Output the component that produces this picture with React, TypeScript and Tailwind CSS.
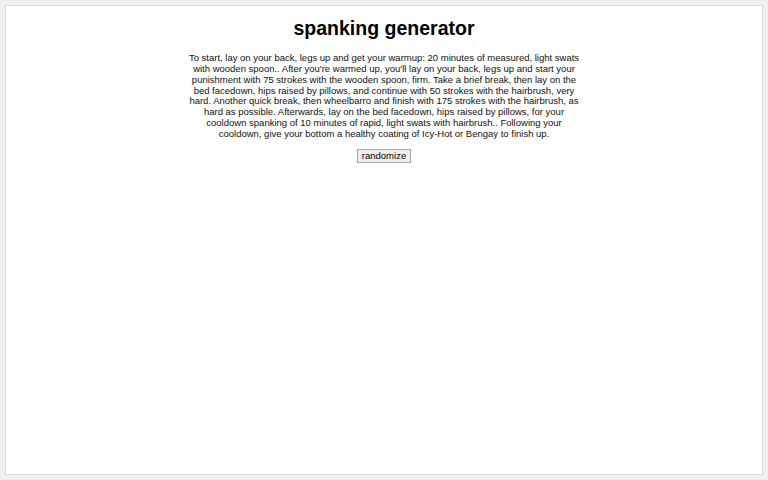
import React, { useState } from "react";

const routine =
  "To start, lay on your back, legs up and get your warmup: 20 minutes of measured, light swats with wooden spoon.. After you're warmed up, you'll lay on your back, legs up and start your punishment with 75 strokes with the wooden spoon, firm. Take a brief break, then lay on the bed facedown, hips raised by pillows, and continue with 50 strokes with the hairbrush, very hard. Another quick break, then wheelbarro and finish with 175 strokes with the hairbrush, as hard as possible. Afterwards, lay on the bed facedown, hips raised by pillows, for your cooldown spanking of 10 minutes of rapid, light swats with hairbrush.. Following your cooldown, give your bottom a healthy coating of Icy-Hot or Bengay to finish up.";

const App: React.FC = () => {
  const [text] = useState(routine);

  return (
    <div className="w-full h-[480px] bg-[#f0f0f0] p-[5px] font-['Liberation_Sans',Arial,sans-serif]">
      <div className="h-full bg-white border border-[#dcdcdc] flex flex-col items-center">
        <h1 className="mt-[10px] text-[19.5px] leading-[24px] font-bold text-black">spanking generator</h1>

        {/* Generated routine */}
        <p className="mt-[13px] w-[394px] text-center text-[9.5px] leading-[10.85px] text-[#111]">{text}</p>

        <button className="mt-[9px] h-[14px] px-[4px] bg-[#efefef] border border-[#a9a9a9] text-[9.5px] leading-[12px] text-black">
          randomize
        </button>
      </div>
    </div>
  );
};

export default App;
